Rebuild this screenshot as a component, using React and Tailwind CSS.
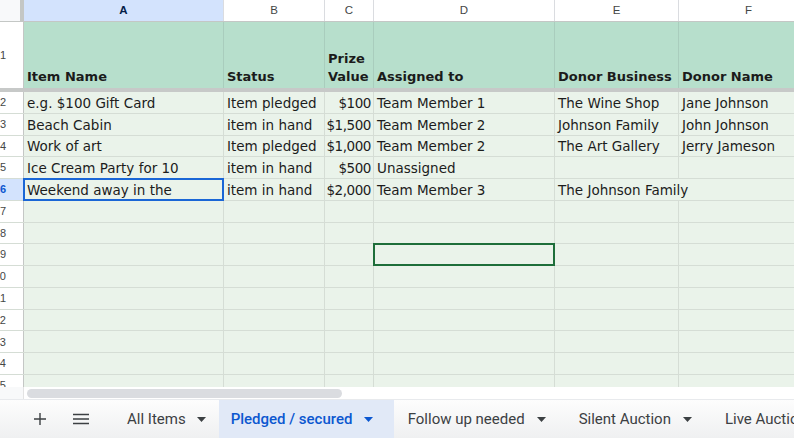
import React from "react";

const COLS = [
  { key: "A", w: "w-[200px]" },
  { key: "B", w: "w-[101px]" },
  { key: "C", w: "w-[49px]" },
  { key: "D", w: "w-[181px]" },
  { key: "E", w: "w-[124px]" },
  { key: "F", w: "w-[140px]" },
];

const DATA = [
  ["e.g. $100 Gift Card", "Item pledged", "$100", "Team Member 1", "The Wine Shop", "Jane Johnson"],
  ["Beach Cabin", "item in hand", "$1,500", "Team Member  2", "Johnson Family", "John Johnson"],
  ["Work of art", "Item pledged", "$1,000", "Team Member  2", "The Art Gallery", "Jerry Jameson"],
  ["Ice Cream Party for 10", "item in hand", "$500", "Unassigned", "", ""],
  ["Weekend away in the", "item in hand", "$2,000", "Team Member 3", "The Johnson Family", ""],
];

const cellFont = { fontFamily: '"DejaVu Sans", "Noto Sans", sans-serif' };
const numFont = { fontFamily: '"Liberation Sans", Arial, sans-serif' };

function Caret({ className }) {
  return (
    <svg width="9" height="5" viewBox="0 0 9 5" className={className}>
      <path d="M0 0 L9 0 L4.5 5 Z" fill="currentColor" />
    </svg>
  );
}

function Row({ n, cells, selectedRow, greenCol }) {
  return (
    <div className="flex h-[21.77px] shrink-0 border-b border-[#d5ddd5]">
      <div
        className={`w-[24px] shrink-0 border-r border-[#c4c7c5] overflow-hidden flex items-center justify-end pr-[17px] text-[11px] ${
          selectedRow ? "bg-[#d3e3fd] text-[#0b57d0] font-bold" : "bg-white text-[#444746]"
        }`}
        style={numFont}
      >
        <span>{n}</span>
      </div>
      {COLS.map((c, i) => {
        const v = cells ? cells[i] : "";
        const right = i === 2;
        const spill = n === 6 && i === 4;
        return (
          <div
            key={c.key}
            className={`${c.w} shrink-0 relative bg-[#eaf3ea] ${spill ? "w-[125px] z-10" : "border-r border-[#d5ddd5]"} ${
              right ? "z-10" : ""
            }`}
          >
            <div
              className={`absolute inset-0 flex items-end pb-[1px] ${
                right ? "justify-end pr-[2px]" : "pl-[3px]"
              } ${spill || right ? "overflow-visible" : "overflow-hidden"}`}
            >
              <span
                className={`whitespace-nowrap text-[13.5px] leading-[18px] text-[#1c1c1c] ${
                  right ? "tracking-[-0.45px]" : ""
                }`}
                style={cellFont}
              >
                {v}
              </span>
            </div>
            {n === 6 && i === 0 && (
              <div className="absolute left-[-1px] top-[-1px] right-[-1px] bottom-[-1px] border-2 border-[#1a66d6] z-20 pointer-events-none" />
            )}
            {greenCol === i && (
              <div className="absolute left-[-1px] top-[-1px] right-[-1px] bottom-[-1px] border-2 border-[#1e6e3a] z-20 pointer-events-none" />
            )}
          </div>
        );
      })}
    </div>
  );
}

export default function App() {
  return (
    <div className="w-[794px] h-[438px] overflow-hidden bg-white flex flex-col">
      <div className="h-[399px] shrink-0 flex flex-col overflow-hidden">
        {/* column letters */}
        <div className="flex h-[22px] shrink-0 border-b border-[#c4c7c5] text-[11.5px] text-[#444746]" style={numFont}>
          <div className="w-[20px] shrink-0 bg-[#f8f9fa]" />
          <div className="w-[4px] shrink-0 bg-[#c4c7c5]" />
          {COLS.map((c, i) => (
            <div
              key={c.key}
              className={`${c.w} shrink-0 flex items-center justify-center border-r border-[#dadce0] ${
                i === 0 ? "bg-[#d3e3fd] text-[#041e49] font-bold" : "bg-white"
              }`}
            >
              {c.key}
            </div>
          ))}
        </div>
        {/* header row 1 */}
        <div className="flex h-[66px] shrink-0">
          <div
            className="w-[24px] shrink-0 bg-white border-r border-[#c4c7c5] overflow-hidden flex items-center justify-end pr-[17px] text-[11px] text-[#444746]"
            style={numFont}
          >
            1
          </div>
          {["Item Name", "Status", "Prize Value", "Assigned to", "Donor Business", "Donor Name"].map((t, i) => (
            <div
              key={i}
              className={`${COLS[i].w} shrink-0 bg-[#b7dfcc] border-r border-[#a9cdbd] flex items-end pl-[3px] pb-[2px] overflow-hidden`}
            >
              <span className="text-[13px] font-bold leading-[18px] text-[#1b1b1b] whitespace-nowrap" style={cellFont}>
                {i === 2 ? (
                  <>
                    Prize
                    <br />
                    Value
                  </>
                ) : (
                  t
                )}
              </span>
            </div>
          ))}
        </div>
        <div className="h-[4px] shrink-0 bg-[#c7c9c8]" />
        <div className="flex-1 min-h-0 flex flex-col overflow-hidden">
          {Array.from({ length: 14 }).map((_, k) => {
            const n = k + 2;
            return <Row key={n} n={n} cells={DATA[k]} selectedRow={n === 6} greenCol={n === 9 ? 3 : -1} />;
          })}
        </div>
        {/* scrollbar */}
        <div className="flex h-[12px] shrink-0 bg-white relative">
          <div className="w-[24px] shrink-0 border-r border-[#e3e3e3] bg-[#f8f9fa]" />
          <div className="absolute left-[27px] top-[2px] w-[315px] h-[9px] rounded-full bg-[#dadce0]" />
        </div>
      </div>
      {/* tab bar */}
      <div
        className="flex-1 flex items-stretch border-t border-[#e8eaed] bg-gradient-to-b from-[#fdfdfd] to-[#eff0f1] text-[15px] text-[#3c4043] whitespace-nowrap overflow-hidden"
        style={{ fontFamily: 'Roboto, "Liberation Sans", sans-serif' }}
      >
        <div className="w-[47px] shrink-0 flex items-center justify-end">
          <svg width="14" height="14" viewBox="0 0 14 14">
            <path d="M7 1 V13 M1 7 H13" stroke="#3c4043" strokeWidth="1.4" />
          </svg>
        </div>
        <div className="w-[42px] shrink-0 flex items-center justify-end">
          <svg width="16" height="12" viewBox="0 0 16 12">
            <path d="M0 1.5 H16 M0 6 H16 M0 10.5 H16" stroke="#3c4043" strokeWidth="1.4" />
          </svg>
        </div>
        <div className="w-[38px] shrink-0" />
        <div className="shrink-0 flex items-center pr-[13px]">
          <span>All Items</span>
          <Caret className="ml-[11px] text-[#3c4043]" />
        </div>
        <div className="w-[175px] shrink-0 flex items-center bg-[#e1e9f7] pl-[12px] text-[#0b57d0] font-medium">
          <span>Pledged / secured</span>
          <Caret className="ml-[12px] text-[#0b57d0]" />
        </div>
        <div className="shrink-0 flex items-center pl-[14px] pr-[33px]">
          <span>Follow up needed</span>
          <Caret className="ml-[12px]" />
        </div>
        <div className="shrink-0 flex items-center pr-[33px]">
          <span>Silent Auction</span>
          <Caret className="ml-[12px]" />
        </div>
        <div className="shrink-0 flex items-center">
          <span>Live Auction</span>
        </div>
      </div>
    </div>
  );
}
